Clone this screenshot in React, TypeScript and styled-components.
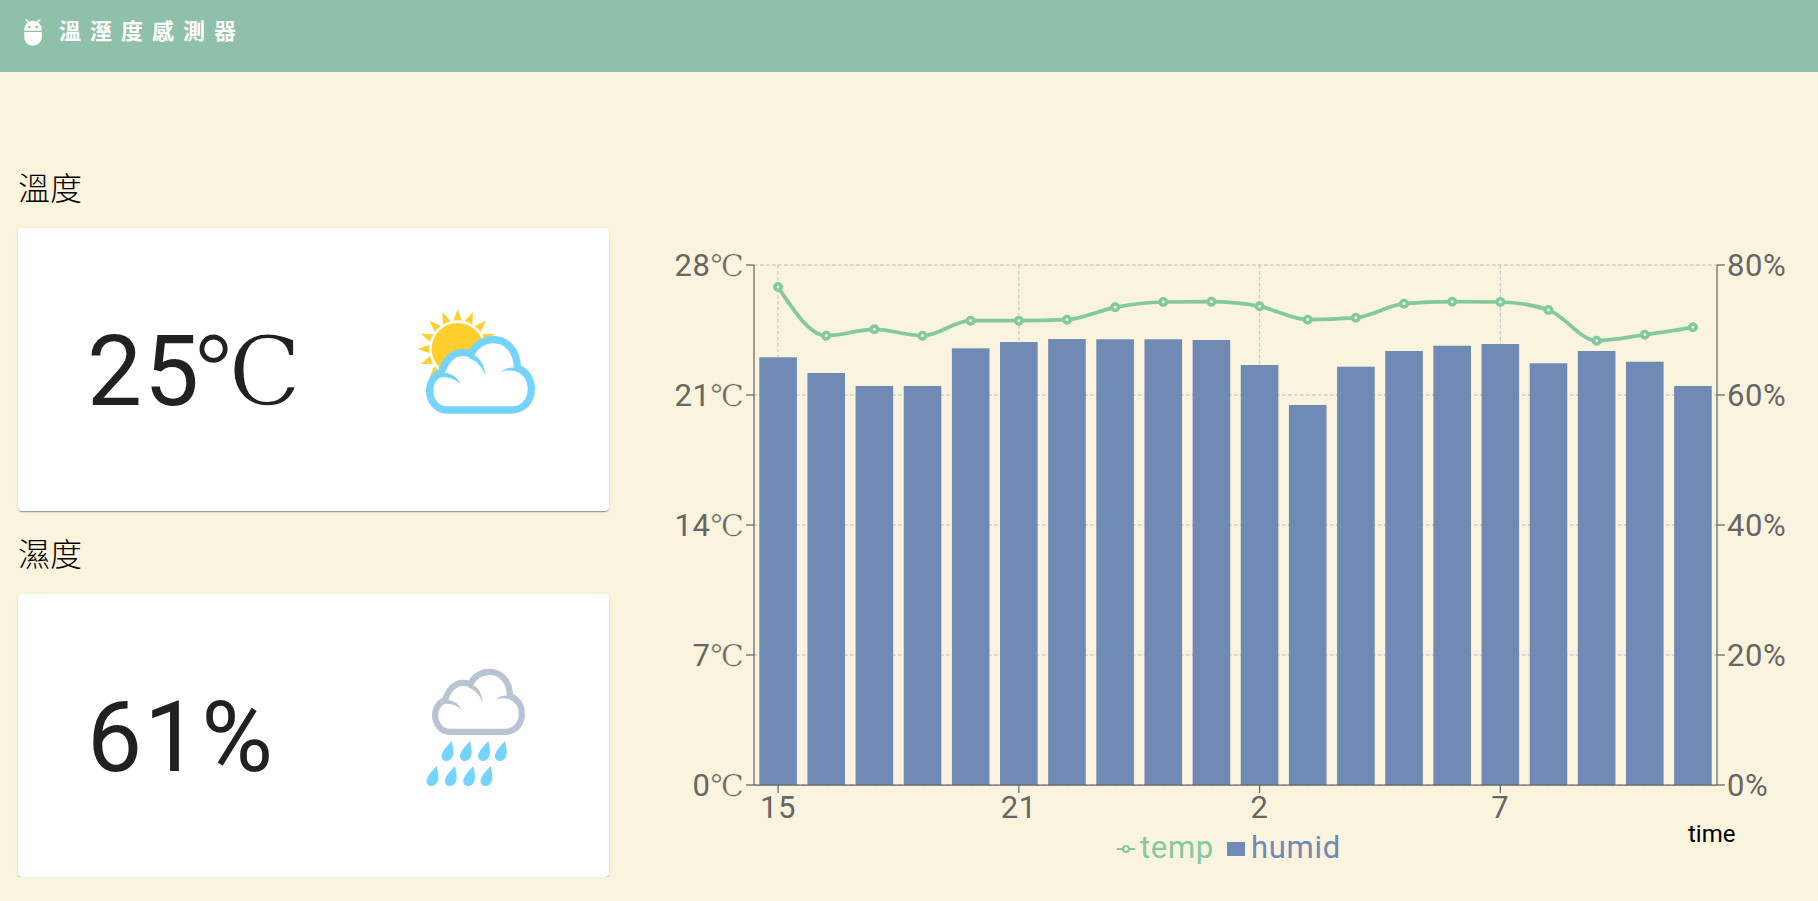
import React from "react";
import styled, { createGlobalStyle } from "styled-components";
import { MdAdb } from "react-icons/md";

const TEXT_FONT = `Roboto, "Noto Sans CJK TC", sans-serif`;
const CJK_FONT = `"Noto Sans CJK TC", Roboto, sans-serif`;
const UNIT_FONT = `"Liberation Serif", "DejaVu Serif", serif`;

// page coordinates of the plot area
const LEFT = 754;
const RIGHT = 1717;
const TOP = 265;
const BOTTOM = 785;
const STEP = (RIGHT - LEFT) / 20;
const BAR_WIDTH = 37.6;

const barTops = [
  357.3, 373, 386, 386, 348.3, 342, 339, 339.3, 339.3, 340, 365, 405, 366.7, 351,
  345.7, 344, 363.3, 351, 361.7, 386,
];
const lineYs = [
  287, 335.7, 329.3, 335.7, 320.7, 320.7, 319.7, 307.3, 302, 301.7, 306.3, 319.7,
  317.7, 303.7, 301.7, 302, 310, 340.7, 334.7, 327.3,
];
const leftTicks = ["28", "21", "14", "7", "0"];
const rightTicks = ["80%", "60%", "40%", "20%", "0%"];
const bottomTicks = [
  { index: 0, label: "15" },
  { index: 5, label: "21" },
  { index: 10, label: "2" },
  { index: 15, label: "7" },
];

const centerX = (i: number) => LEFT + STEP * i + STEP / 2;

// same shape as a monotone-x curve
function monotonePath(xs: number[], ys: number[]) {
  const n = xs.length;
  const slopes: number[] = [];
  for (let i = 0; i < n - 1; i++) slopes.push((ys[i + 1] - ys[i]) / (xs[i + 1] - xs[i]));
  const t: number[] = [];
  for (let i = 1; i < n - 1; i++) {
    const a = slopes[i - 1];
    const b = slopes[i];
    t[i] =
      a * b <= 0
        ? 0
        : (Math.sign(a) + Math.sign(b)) *
          Math.min(Math.abs(a), Math.abs(b), 0.25 * Math.abs(a + b));
  }
  t[0] = (3 * slopes[0] - t[1]) / 2;
  t[n - 1] = (3 * slopes[n - 2] - t[n - 2]) / 2;
  let d = `M${xs[0]},${ys[0]}`;
  for (let i = 0; i < n - 1; i++) {
    const h = (xs[i + 1] - xs[i]) / 3;
    d += `C${xs[i] + h},${ys[i] + h * t[i]} ${xs[i + 1] - h},${ys[i + 1] - h * t[i + 1]} ${xs[i + 1]},${ys[i + 1]}`;
  }
  return d;
}

const CLOUD =
  "M170 388H365C400 388 424 360 424 325C424 295 408 272 382 262C382 210 350 177 310 177C280 177 258 192 243 219C234 217 226 216 216 216C188 216 165 240 154 276C134 283 119 304 119 330C119 362 142 388 170 388Z";
const CLOUD_FOLDS = [
  "M243 219C268 226 284 252 286 284C276 256 258 240 236 232Z",
  "M331 274C346 262 364 258 383 262L390 276C370 268 350 268 331 274Z",
  "M154 276C178 274 200 286 212 310C196 296 176 288 150 290Z",
];

function PartlySunny() {
  const rays = Array.from({ length: 16 }, (_, i) => i * 22.5);
  return (
    <svg width="180" height="160" viewBox="0 28 540 480">
      {rays.map((deg) => (
        <polygon
          key={deg}
          points="203,85 187,130 219,130"
          fill="#ffcf2e"
          transform={`rotate(${deg} 203 205)`}
        />
      ))}
      <circle cx="203" cy="205" r="86" fill="#fff" />
      <circle cx="203" cy="205" r="78" fill="#ffcf2e" />
      <path d={CLOUD} fill="#fff" stroke="#75d4ff" strokeWidth="22" />
      {CLOUD_FOLDS.map((d) => (
        <path key={d} d={d} fill="#75d4ff" />
      ))}
    </svg>
  );
}

const drops = [
  [145, 302],
  [200, 302],
  [255, 302],
  [305, 302],
  [100, 377],
  [155, 377],
  [210, 377],
  [262, 377],
];

function RainCloud() {
  return (
    <svg width="160" height="150" viewBox="0 31 480 450">
      <g transform="translate(3.9 -87.5) scale(0.853)">
        <path d={CLOUD} fill="#fff" stroke="#b8c4d6" strokeWidth="22" />
        {CLOUD_FOLDS.map((d) => (
          <path key={d} d={d} fill="#b8c4d6" />
        ))}
      </g>
      {drops.map(([x, y]) => (
        <path
          key={`${x}-${y}`}
          transform={`translate(${x} ${y}) scale(1.08)`}
          d="M9-29C1-19-19-1-19 13C-19 22-12 27-5 27C7 27 14 15 14 2C14-9 11-20 9-29Z"
          fill="#75d4ff"
        />
      ))}
    </svg>
  );
}

function Chart() {
  const xs = barTops.map((_, i) => centerX(i));
  return (
    <ChartSvg width="1178" height="640" viewBox="640 230 1178 640">
      {leftTicks.map((_, i) => (
        <GridLine key={i} x1={LEFT} x2={RIGHT} y1={TOP + i * 130} y2={TOP + i * 130} />
      ))}
      {bottomTicks.map((t) => (
        <GridLine key={t.label} x1={centerX(t.index)} x2={centerX(t.index)} y1={TOP} y2={BOTTOM} />
      ))}

      {barTops.map((top, i) => (
        <Bar key={i} x={xs[i] - BAR_WIDTH / 2} y={top} width={BAR_WIDTH} height={BOTTOM - top} />
      ))}

      <AxisLine x1={LEFT} x2={LEFT} y1={TOP} y2={BOTTOM} />
      <AxisLine x1={RIGHT} x2={RIGHT} y1={TOP} y2={BOTTOM} />
      <AxisLine x1={LEFT} x2={RIGHT} y1={BOTTOM} y2={BOTTOM} />

      {leftTicks.map((label, i) => (
        <g key={label}>
          <AxisLine x1={746} x2={LEFT} y1={TOP + i * 130} y2={TOP + i * 130} />
          <TickText x={744} y={TOP + i * 130 + 11} textAnchor="end">
            {label}
            <UnitSpan>℃</UnitSpan>
          </TickText>
        </g>
      ))}
      {rightTicks.map((label, i) => (
        <g key={label}>
          <AxisLine x1={RIGHT} x2={1725} y1={TOP + i * 130} y2={TOP + i * 130} />
          <TickText x={1727} y={TOP + i * 130 + 11}>
            {label}
          </TickText>
        </g>
      ))}
      {bottomTicks.map((t) => (
        <g key={t.label}>
          <AxisLine x1={centerX(t.index)} x2={centerX(t.index)} y1={BOTTOM} y2={793} />
          <TickText x={centerX(t.index)} y={818} textAnchor="middle">
            {t.label}
          </TickText>
        </g>
      ))}

      <TempLine d={monotonePath(xs, lineYs)} />
      {lineYs.map((y, i) => (
        <TempDot key={i} cx={xs[i]} cy={y} r={3.2} />
      ))}

      <LegendLine x1={1117} x2={1135} y1={849} y2={849} />
      <LegendDot cx={1126} cy={849} r={3} />
      <LegendText x={1140} y={858} $color="#82ca9d">
        temp
      </LegendText>
      <Bar x={1227} y={842} width={18} height={14} />
      <LegendText x={1251} y={858} $color="#6e8ab5">
        humid
      </LegendText>

      <TimeLabel x={1688} y={842}>
        time
      </TimeLabel>
    </ChartSvg>
  );
}

export default function App() {
  return (
    <>
      <GlobalStyle />
      <AppBar>
        <BarIcon />
        <BarTitle>溫溼度感測器</BarTitle>
      </AppBar>
      <Main>
        <LeftColumn>
          <SectionLabel>溫度</SectionLabel>
          <Card>
            <Reading>
              25<ReadingUnit>℃</ReadingUnit>
            </Reading>
            <IconCell>
              <PartlySunny />
            </IconCell>
          </Card>
          <SectionLabel>濕度</SectionLabel>
          <Card>
            <Reading>61%</Reading>
            <IconCell>
              <RainCloud />
            </IconCell>
          </Card>
        </LeftColumn>
        <Chart />
      </Main>
    </>
  );
}

const GlobalStyle = createGlobalStyle`
  html, body {
    margin: 0;
    background: #faf3dd;
    overflow: hidden;
  }
`;

const AppBar = styled.header`
  display: flex;
  align-items: flex-start;
  height: 72px;
  padding: 17px 0 0 18px;
  box-sizing: border-box;
  background: #8fc0a9;
  color: #fff;
`;

const BarIcon = styled(MdAdb)`
  width: 30px;
  height: 30px;
  flex: none;
`;

const BarTitle = styled.h1`
  margin: 0 0 0 11px;
  font-family: ${CJK_FONT};
  font-size: 22px;
  font-weight: 700;
  line-height: 24px;
  letter-spacing: 9px;
`;

const Main = styled.main`
  display: flex;
  padding: 73px 0 0 18px;
`;

const LeftColumn = styled.section`
  flex: none;
  width: 591px;
`;

const SectionLabel = styled.h2`
  height: 83px;
  margin: 0;
  font-family: ${CJK_FONT};
  font-size: 32px;
  font-weight: 300;
  line-height: 82px;
  color: #000;
`;

const Card = styled.div`
  display: flex;
  align-items: center;
  justify-content: space-between;
  height: 283px;
  padding: 0 39px 0 69px;
  box-sizing: border-box;
  border-radius: 4px;
  background: #fff;
  box-shadow: 0 2px 1px -1px rgba(0, 0, 0, 0.2), 0 1px 1px 0 rgba(0, 0, 0, 0.14),
    0 1px 3px 0 rgba(0, 0, 0, 0.12);
`;

const Reading = styled.div`
  padding-top: 5px;
  font-family: ${TEXT_FONT};
  font-size: 98px;
  font-weight: 400;
  line-height: 1;
  letter-spacing: 2px;
  color: rgba(0, 0, 0, 0.87);
`;

const ReadingUnit = styled.span`
  margin-left: -7px;
  font-family: ${UNIT_FONT};
  font-size: 96px;
  letter-spacing: 0;
  -webkit-text-stroke: 1.6px #fff;
`;

const IconCell = styled.div`
  display: flex;
  justify-content: center;
  width: 180px;
`;

const ChartSvg = styled.svg`
  flex: none;
  margin: 85px 0 0 31px;
`;

const GridLine = styled.line`
  stroke: #ccc;
  stroke-width: 1.3;
  stroke-dasharray: 3.5 2.5;
`;

const AxisLine = styled.line`
  stroke: #666;
  stroke-width: 1.25;
`;

const Bar = styled.rect`
  fill: #6e8ab5;
`;

const TempLine = styled.path`
  fill: none;
  stroke: #82ca9d;
  stroke-width: 3.75;
`;

const TempDot = styled.circle`
  fill: #fff;
  stroke: #82ca9d;
  stroke-width: 3.6;
`;

const LegendLine = styled.line`
  stroke: #82ca9d;
  stroke-width: 2;
`;

const LegendDot = styled.circle`
  fill: #faf3dd;
  stroke: #82ca9d;
  stroke-width: 2;
`;

const TickText = styled.text`
  font-family: ${TEXT_FONT};
  font-size: 31px;
  font-weight: 400;
  letter-spacing: 0.6px;
  fill: #666;
`;

const UnitSpan = styled.tspan`
  font-family: ${UNIT_FONT};
  font-size: 30px;
  letter-spacing: 0;
  stroke: #faf3dd;
  stroke-width: 0.5px;
`;

const LegendText = styled.text<{ $color: string }>`
  font-family: ${TEXT_FONT};
  font-size: 31px;
  font-weight: 400;
  letter-spacing: 0.7px;
  fill: ${(p) => p.$color};
`;

const TimeLabel = styled.text`
  font-family: ${TEXT_FONT};
  font-size: 24px;
  fill: #000;
`;
